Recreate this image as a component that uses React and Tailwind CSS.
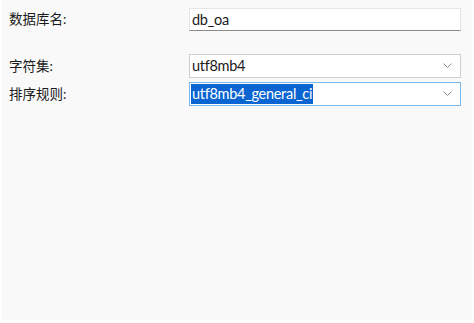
export default function App() {
  return (
    <div className="w-[474px] h-[323px] bg-white" style={{ fontFamily: 'Lato, "Noto Sans CJK SC", sans-serif' }}>
      <div className="ml-[2px] w-[470px] h-[320px] bg-[#f9f9f9] text-[14.5px] tracking-[-0.3px] text-[#1a1a1a]">
        <div className="flex items-center pt-[8px]">
          <label className="w-[187px] pl-[7px] text-[13.5px] tracking-normal">数据库名:</label>
          <div className="w-[272px] h-[23px] bg-white border border-[#e6e6e6] border-b-[#8a8a8a] flex items-center px-[2px]">db_oa</div>
        </div>

        <div className="flex items-center mt-[23px]">
          <label className="w-[187px] pl-[7px] text-[13.5px] tracking-normal">字符集:</label>
          <div className="w-[272px] h-[24px] bg-white border border-[#cfcfcf] flex items-center justify-between pl-[2px] pr-[8px]">
            <span>utf8mb4</span>
            <Chevron />
          </div>
        </div>

        <div className="flex items-center mt-[4px]">
          <label className="w-[187px] pl-[7px] text-[13.5px] tracking-normal">排序规则:</label>
          <div className="w-[272px] h-[24px] bg-white border border-[#7ab8ec] flex items-center justify-between pl-[1px] pr-[8px]">
            <span className="bg-[#0a64d2] text-white px-[1px] leading-[20px]">utf8mb4_general_ci</span>
            <Chevron />
          </div>
        </div>
      </div>
    </div>
  );
}

function Chevron() {
  return (
    <svg width="9" height="6" viewBox="0 0 9 6" fill="none">
      <path d="M0.5 0.5 L4.5 4.5 L8.5 0.5" stroke="#8a8a8a" strokeWidth="1" />
    </svg>
  );
}
